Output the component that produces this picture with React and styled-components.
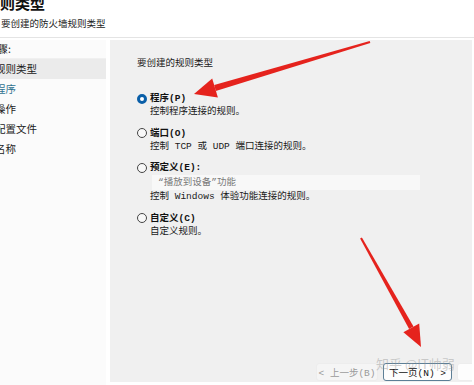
import React from "react";
import styled, { createGlobalStyle } from "styled-components";

const Global = createGlobalStyle`
  html, body { margin: 0; padding: 0; background: #ffffff; }
  body {
    width: 474px; height: 385px; overflow: hidden; position: relative;
    font-family: "Liberation Mono", "Noto Sans CJK SC", monospace;
    color: #1a1a1a;
  }
`;

const Page = styled.div`
  width: 474px;
  height: 385px;
  display: flex;
  flex-direction: column;
  overflow: hidden;
`;

const Header = styled.div`
  height: 37px;
  border-bottom: 1px solid #e4e4e4;
  display: flex;
  flex-direction: column;
  overflow: hidden;
  flex-shrink: 0;
`;

const Title = styled.div`
  font-family: "Noto Sans CJK SC", sans-serif;
  font-size: 15px;
  font-weight: 700;
  line-height: 18px;
  margin-top: -6px;
  margin-left: -15px;
  color: #111;
`;

const Subtitle = styled.div`
  font-family: "Noto Sans CJK SC", sans-serif;
  font-size: 9.5px;
  line-height: 12px;
  margin-top: 5px;
  margin-left: 1px;
  color: #222;
`;

const Main = styled.div`
  flex: 1;
  display: flex;
  gap: 4px;
  padding-top: 2px;
  min-height: 0;
`;

const Sidebar = styled.div`
  width: 106px;
  flex-shrink: 0;
  background: #fbfbfb;
  display: flex;
  flex-direction: column;
  overflow: hidden;
`;

const SideHeader = styled.div`
  height: 18px;
  line-height: 18px;
  font-family: "Noto Sans CJK SC", sans-serif;
  font-size: 10.5px;
  margin-left: -13px;
  border-bottom: 1px solid #f0f0f0;
  white-space: nowrap;
`;

const SideItem = styled.div`
  height: 20px;
  line-height: 20px;
  font-family: "Noto Sans CJK SC", sans-serif;
  font-size: 10.5px;
  padding-left: 0;
  margin-left: ${(p) => (p.$selected ? "0" : "0")};
  background: ${(p) => (p.$selected ? "#ebebeb" : "transparent")};
  color: ${(p) => (p.$current ? "#2f7290" : "#1a1a1a")};
  white-space: nowrap;
  & > span { margin-left: -5px; display: inline-block; }
`;

const Panel = styled.div`
  width: 362px;
  flex-shrink: 0;
  margin-bottom: 3px;
  background: #f0f0f0;
  display: flex;
  flex-direction: column;
  padding-left: 27px;
  box-sizing: border-box;
  overflow: hidden;
`;

const Heading = styled.div`
  font-family: "Noto Sans CJK SC", sans-serif;
  font-size: 9.5px;
  line-height: 13px;
  margin-top: 16px;
  margin-bottom: 23px;
`;

const Option = styled.div`
  display: flex;
  flex-direction: column;
  margin-bottom: 8.5px;
`;

const LabelRow = styled.div`
  display: flex;
  align-items: center;
  gap: 3px;
  height: 13px;
`;

const Radio = styled.span`
  width: 10px;
  height: 10px;
  border-radius: 50%;
  box-sizing: border-box;
  flex-shrink: 0;
  background: ${(p) => (p.$checked ? "#ffffff" : "#f8f8f8")};
  border: ${(p) => (p.$checked ? "3px solid #0a5fa8" : "1px solid #444")};
`;

const Label = styled.span`
  font-size: 9.5px;
  font-weight: 700;
  line-height: 13px;
  white-space: pre;
  color: #111;
`;

const Desc = styled.div`
  font-size: 9.5px;
  line-height: 13px;
  padding-left: 13px;
  white-space: pre;
  color: #1a1a1a;
`;

const Field = styled.div`
  margin-left: 15px;
  width: 268px;
  height: 15px;
  background: #f8f8f8;
  font-size: 9.5px;
  line-height: 15px;
  color: #7a7a7a;
  padding-left: 6px;
  box-sizing: border-box;
  margin-top: 1px;
  white-space: pre;
`;

const ButtonRow = styled.div`
  margin-top: auto;
  margin-bottom: 1px;
  display: flex;
  gap: 5px;
  padding-left: 179px;
  height: 18px;
`;

const Button = styled.div`
  flex-shrink: 0;
  width: ${(p) => p.$w}px;
  height: 18px;
  box-sizing: border-box;
  border-radius: 3px;
  display: flex;
  align-items: center;
  justify-content: center;
  font-size: 9.5px;
  white-space: pre;
  background: ${(p) => (p.$variant === "disabled" ? "#f5f5f5" : "#fdfdfd")};
  color: ${(p) => (p.$variant === "disabled" ? "#9a9a9a" : "#111")};
  border: ${(p) =>
    p.$variant === "default" ? "1px solid #5d7f96" : "1px solid #ededed"};
`;

const Watermark = styled.div`
  position: absolute;
  left: 376px;
  top: 354px;
  font-family: "Noto Sans CJK SC", sans-serif;
  font-size: 13px;
  color: rgba(150, 150, 150, 0.45);
  white-space: nowrap;
  pointer-events: none;
`;

const Overlay = styled.svg`
  position: absolute;
  left: 0;
  top: 0;
  pointer-events: none;
`;

const sideItems = [
  { t: "规则类型", selected: true },
  { t: "程序", current: true },
  { t: "操作" },
  { t: "配置文件" },
  { t: "名称" },
];

export default function App() {
  return (
    <>
      <Global />
      <Page>
        <Header>
          <Title>规则类型</Title>
          <Subtitle>要创建的防火墙规则类型</Subtitle>
        </Header>
        <Main>
          <Sidebar>
            <SideHeader>步骤:</SideHeader>
            {sideItems.map((it) => (
              <SideItem key={it.t} $selected={it.selected} $current={it.current}>
                <span>{it.t}</span>
              </SideItem>
            ))}
          </Sidebar>
          <Panel>
            <Heading>要创建的规则类型</Heading>
            <Option>
              <LabelRow>
                <Radio $checked />
                <Label>程序(P)</Label>
              </LabelRow>
              <Desc>控制程序连接的规则。</Desc>
            </Option>
            <Option>
              <LabelRow>
                <Radio />
                <Label>端口(O)</Label>
              </LabelRow>
              <Desc>控制 TCP 或 UDP 端口连接的规则。</Desc>
            </Option>
            <Option>
              <LabelRow>
                <Radio />
                <Label>预定义(E):</Label>
              </LabelRow>
              <Field>“播放到设备”功能</Field>
              <Desc>控制 Windows 体验功能连接的规则。</Desc>
            </Option>
            <Option>
              <LabelRow>
                <Radio />
                <Label>自定义(C)</Label>
              </LabelRow>
              <Desc>自定义规则。</Desc>
            </Option>
            <ButtonRow>
              <Button $w={62} $variant="disabled">{"< 上一步(B)"}</Button>
              <Button $w={69} $variant="default">{"下一页(N) >"}</Button>
              <Button $w={70}>取消</Button>
            </ButtonRow>
          </Panel>
        </Main>
      </Page>
      <Watermark>知乎 @IT帅弱</Watermark>
      <Overlay width="474" height="385" viewBox="0 0 474 385">
        <polygon
          fill="#e5231d"
          points="370.3,43 369.7,41 214.2,85.1 215.8,90.9"
        />
        <polygon fill="#e5231d" points="194,94 212.2,78.4 217.9,97.6" />
        <polygon
          fill="#e5231d"
          points="361.9,237.5 360.1,238.5 409.1,329 413.5,326.6"
        />
        <polygon fill="#e5231d" points="421,347 403.4,332.2 419.2,323.4" />
      </Overlay>
    </>
  );
}
